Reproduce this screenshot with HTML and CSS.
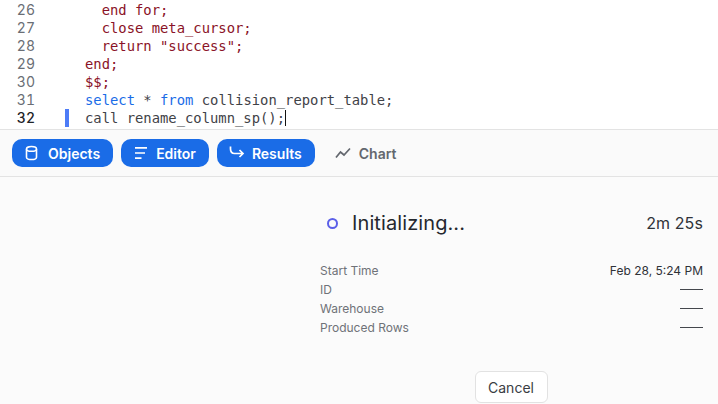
FILE: index.html
```html
<!DOCTYPE html>
<html lang="en">
<head>
<meta charset="utf-8">
<title>Worksheet</title>
<link rel="stylesheet" href="styles.css">
</head>
<body>
<div class="app">
  <section class="editor">
    <div class="line"><span class="num">26</span><span class="mark"></span><code class="code str">  end for;</code></div>
    <div class="line"><span class="num">27</span><span class="mark"></span><code class="code str">  close meta_cursor;</code></div>
    <div class="line"><span class="num">28</span><span class="mark"></span><code class="code str">  return "success";</code></div>
    <div class="line"><span class="num">29</span><span class="mark"></span><code class="code str">end;</code></div>
    <div class="line"><span class="num">30</span><span class="mark"></span><code class="code str">$$;</code></div>
    <div class="line"><span class="num">31</span><span class="mark"></span><code class="code"><span class="kw">select</span> * <span class="kw">from</span> collision_report_table;</code></div>
    <div class="line current"><span class="num">32</span><span class="mark on"></span><code class="code">call rename_column_sp();<span class="caret"></span></code></div>
  </section>
  <nav class="tabs">
    <button class="tab active">
      <svg class="icon" viewBox="0 0 16 16" fill="none" stroke="currentColor" stroke-width="1.6"><path d="M2.500 4c0-3.300 10-3.300 10 0v8.200c0 3.100-10 3.100-10 0z"/><path d="M2.500 4.200c0 2.700 10 2.700 10 0"/></svg>
      <span class="label">Objects</span>
    </button>
    <button class="tab active tight">
      <svg class="icon" viewBox="0 0 16 16" fill="none" stroke="currentColor" stroke-width="1.7"><path d="M2 2.800h12M2 8h10M2 13.200h6.500"/></svg>
      <span class="label">Editor</span>
    </button>
    <button class="tab active tight">
      <svg class="icon" viewBox="0 0 16 16" fill="none" stroke="currentColor" stroke-width="1.7"><path d="M1.500 1.500v2.500c0 2.800 1.700 4.500 4 4.500h8.500M10.500 5l3.500 3.500-3.500 3.500"/></svg>
      <span class="label">Results</span>
    </button>
    <button class="tab plain">
      <svg class="icon" viewBox="0 0 16 16" fill="none" stroke="currentColor" stroke-width="1.7"><path d="M1 12.500l4.500-5.500 3.500 3 6-6.500"/></svg>
      <span class="label">Chart</span>
    </button>
  </nav>
  <main class="results">
    <div class="panel">
      <div class="status">
        <span class="dot"></span>
        <span class="title">Initializing...</span>
        <span class="elapsed">2m 25s</span>
      </div>
      <dl class="meta">
        <div class="row"><dt>Start Time</dt><dd>Feb 28, 5:24 PM</dd></div>
        <div class="row"><dt>ID</dt><dd class="dash"></dd></div>
        <div class="row"><dt>Warehouse</dt><dd class="dash"></dd></div>
        <div class="row"><dt>Produced Rows</dt><dd class="dash"></dd></div>
      </dl>
      <div class="actions"><button class="cancel">Cancel</button></div>
    </div>
  </main>
</div>
</body>
</html>
```
FILE: styles.css
```css
* { box-sizing: border-box; }
html, body { margin: 0; height: 100%; overflow: hidden; }
body { font-family: Inter, "Liberation Sans", sans-serif; background: #fbfbfb; color: #2b2f36; }
.app { width: 718px; height: 404px; display: flex; flex-direction: column; }

.editor { height: 130px; background: #fff; border-bottom: 1px solid #e3e3e3; padding-top: 1px; flex: none; overflow: hidden; }
.line { display: flex; height: 18px; align-items: center; }
.num { width: 35px; text-align: right; font: 14px/18px Inter, sans-serif; font-variant-numeric: tabular-nums; color: #6a6e75; flex: none; }
.current .num { color: #1f2328; font-weight: 500; }
.mark { width: 4px; height: 18px; margin: 0 16px 0 30px; flex: none; }
.mark.on { background: #4d7cf7; }
.code { font: 13.85px/18px "DejaVu Sans Mono", monospace; white-space: pre; color: #3f4247; }
.str { color: #8a1227; }
.kw { color: #1a6ce7; }
.caret { display: inline-block; width: 1px; height: 16px; background: #111; vertical-align: -3px; }

.tabs { height: 47px; flex: none; display: flex; align-items: center; gap: 8px; padding: 0 12px; border-bottom: 1px solid #e3e3e3; background: #fafafa; }
.tab { height: 28px; border: 0; border-radius: 10px; padding: 0 13px 0 12px; display: flex; align-items: center; gap: 8px; font: 600 14px/20px Inter, sans-serif; }
.tab.tight { gap: 7px; }
.label { padding-top: 1px; }
.tab.active { background: #1a6ce7; color: #fff; }
.tab.plain { background: none; color: #63676e; padding-left: 12px; }
.icon { width: 16px; height: 16px; flex: none; }

.results { flex: 1; padding: 0 15px 0 320px; }
.panel { display: flex; flex-direction: column; height: 100%; }
.status { display: flex; align-items: center; margin-top: 32px; height: 28px; }
.dot { width: 11px; height: 11px; border: 2px solid #5b5fe8; border-radius: 50%; margin: 0 14px 0 7px; flex: none; }
.title { font-size: 20px; letter-spacing: 0.1px; flex: 1; color: #25282e; }
.elapsed { font-size: 16px; letter-spacing: 0.1px; color: #2f3238; }
.meta { margin: 24px 0 0; font-size: 12px; }
.row { display: flex; justify-content: space-between; align-items: center; height: 19px; }
dt { color: #6f7278; }
dd { margin: 0; color: #2f3238; }
.dash { width: 23px; height: 1px; background: #44474d; }
.actions { display: flex; justify-content: center; margin-top: 34px; padding-right: 1px; }
.cancel { width: 73px; height: 32px; background: #fff; border: 1px solid #e2e2e2; border-radius: 6px; font: 400 14px Inter, sans-serif; color: #3a3d43; }
```
